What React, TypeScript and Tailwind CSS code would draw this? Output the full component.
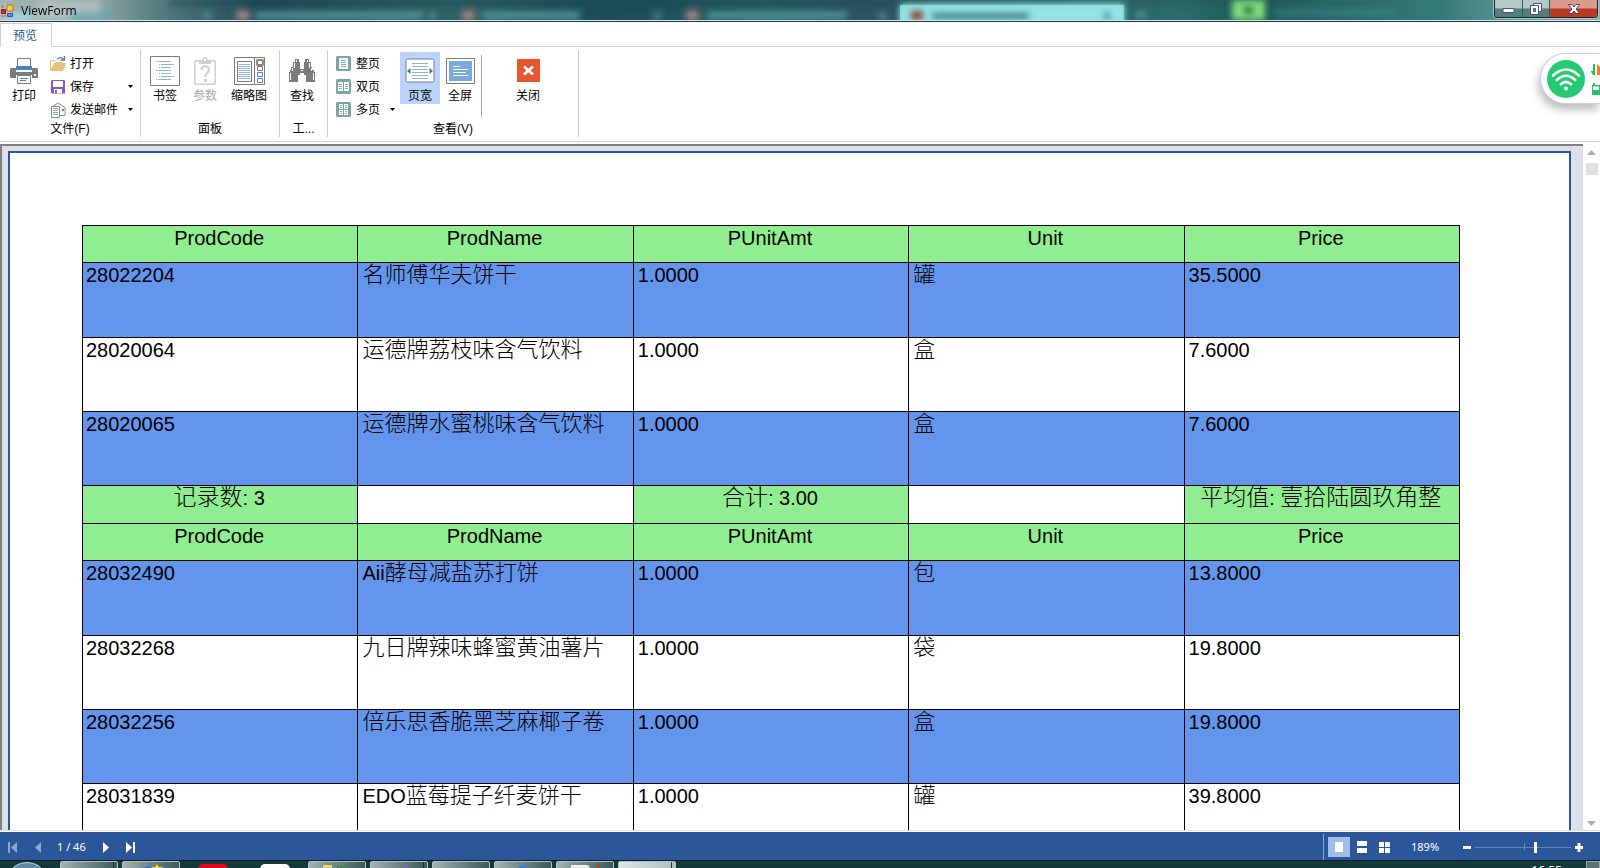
import type { ReactNode } from "react";

const columns = ["ProdCode", "ProdName", "PUnitAmt", "Unit", "Price"];

const groups = [
  {
    rows: [
      ["28022204", "名师傅华夫饼干", "1.0000", "罐", "35.5000"],
      ["28020064", "运德牌荔枝味含气饮料", "1.0000", "盒", "7.6000"],
      ["28020065", "运德牌水蜜桃味含气饮料", "1.0000", "盒", "7.6000"],
    ],
    summary: ["记录数: 3", "", "合计: 3.00", "", "平均值: 壹拾陆圆玖角整"],
  },
  {
    rows: [
      ["28032490", "Aii酵母减盐苏打饼", "1.0000", "包", "13.8000"],
      ["28032268", "九日牌辣味蜂蜜黄油薯片", "1.0000", "袋", "19.8000"],
      ["28032256", "倍乐思香脆黑芝麻椰子卷", "1.0000", "盒", "19.8000"],
      ["28031839", "EDO蓝莓提子纤麦饼干", "1.0000", "罐", "39.8000"],
    ],
    summary: null,
  },
];

/* ---------- ribbon icons ---------- */

function PrinterIcon() {
  return (
    <svg width="28" height="26" viewBox="0 0 28 26">
      <path d="M7.500 9V.5h13V9" fill="#fff" stroke="#7b7b7b" />
      <path d="M0 11l1-1h5v4h16v-4h5l1 1v9h-6v-3H6v3H1l-1-1z" fill="#7b7b7b" />
      <path d="M6 8h16v4H6z" fill="#4d82b8" />
      <path d="M24 16h2v2h-2z" fill="#fff" />
      <path d="M7.500 17.500h13v8h-13z" fill="#fff" stroke="#7b7b7b" />
      <path d="M10 20.500h8M10 22.500h6" stroke="#4d82b8" />
    </svg>
  );
}

function OpenIcon() {
  return (
    <svg width="16" height="16" viewBox="0 0 16 16">
      <path d="M.5 14V4.500h4l1.500 2h6V8" fill="#fff" stroke="#e8c17c" />
      <path d="M0 15l4-8h12l-3 8z" fill="#e8c17c" />
      <path d="M7 3.500c1.500-2.500 5-2.500 6.500-.5M14.500 0v4h-4" fill="none" stroke="#4d82b8" strokeWidth="1.300" />
    </svg>
  );
}

function SaveIcon() {
  return (
    <svg width="16" height="16" viewBox="0 0 16 16">
      <path d="M2 1h12.500l.5 1v12.500H2l-1-1V2z" fill="#8c55b4" />
      <path d="M3 2h10v6H3zM4 10h8v4H4z" fill="#fff" />
      <path d="M5 11h2v3H5z" fill="#8c55b4" />
    </svg>
  );
}

function MailIcon() {
  return (
    <svg width="16" height="16" viewBox="0 0 16 16">
      <path d="M1.500 5.500L8 .8l7 4.700v8H9" fill="#fff" stroke="#8a8a8a" />
      <path d="M1.500 4.500h8v11h-8z" fill="#fff" stroke="#8a8a8a" />
      <path d="M3 6.500h5M3 8.500h5M3 10.500h5M3 12.500h5" stroke="#7ea6d6" />
      <path d="M12 7h2v2h-2z" fill="#e8552f" />
    </svg>
  );
}

function BookmarkIcon() {
  return (
    <svg width="30" height="30" viewBox="0 0 30 30">
      <path d="M.5.500h29v29H.5z" fill="#fff" stroke="#7b7b7b" />
      <path d="M8 5.500h13M11 8.500h13M11 11.500h10M8 14.500h13M11 17.500h10M11 20.500h13M8 23.500h13" stroke="#8fb3dd" />
      <path d="M6 5.500h1M9 8.500h1M9 11.500h1M6 14.500h1M9 17.500h1M9 20.500h1M6 23.500h1" stroke="#8fb3dd" />
    </svg>
  );
}

function ParametersIcon() {
  return (
    <svg width="22" height="28" viewBox="0 0 22 28" fill="none">
      <rect x=".75" y="3.750" width="20.500" height="23.500" rx="1.500" stroke="#cfcfcf" strokeWidth="1.500" />
      <path d="M5 3h3.500V1.500Q11-1 13.500 1.500V3H17v4H5z" fill="#cfcfcf" />
      <path d="M10 2h2v2h-2z" fill="#fff" />
      <path d="M7.500 13c0-5 7.500-5 7.500-.5 0 3.500-3.700 3.500-3.700 7.500" stroke="#cfcfcf" strokeWidth="2" />
      <path d="M10 22h3v3h-3z" fill="#cfcfcf" />
    </svg>
  );
}

function ThumbnailsIcon() {
  return (
    <svg width="31" height="28" viewBox="0 0 31 28" fill="none">
      <path d="M.5.500h30v27H.5zM20.500.500v27M3.500 4.500h14v20h-14z" fill="#fff" stroke="#7b7b7b" />
      <path d="M5 7.500h11M5 9.500h11M5 11.500h11M5 13.500h11M5 15.500h11M5 17.500h11M5 19.500h11M5 21.500h11" stroke="#8fb3dd" />
      <path d="M23.500 9.500h5v4h-5zM23.500 15.500h5v4h-5zM23.500 21.500h5v4h-5z" stroke="#4d82b8" />
      <path d="M22.500 2.500h7v6h-7z" stroke="#e87b3c" />
      <path d="M23.500 3.500h5v4h-5z" stroke="#4d82b8" />
    </svg>
  );
}

function BinocularsIcon() {
  return (
    <svg width="26" height="24" viewBox="0 0 26 24" fill="#7b7b7b">
      <path d="M6 0h4v3h1v7h4V3h1V0h4v3h2v5h1v3h2v2h1v10h-9v-7h-2v-2h-4v2H9v7H0V13h1v-2h1V8h2V3h2z" />
      <path d="M7.500 1v2M18.500 1v2M5.500 4v5M20.500 4v5M3.500 9v3M22.500 9v3M1.500 14v7M24.500 14v7M12 11.500h2" stroke="#fff" />
    </svg>
  );
}

function PagesIcon({ layout }: { layout: "single" | "double" | "multi" }) {
  return (
    <svg width="15" height="15" viewBox="0 0 15 15">
      <rect width="15" height="15" rx="1.500" fill="#78a898" />
      {layout === "single" && (
        <>
          <path d="M3 2h9v11H3z" fill="#fff" />
          <path d="M5 4.500h5M5 6.500h5M5 8.500h5M5 10.500h5" stroke="#8da5d8" />
        </>
      )}
      {layout === "double" && (
        <>
          <path d="M2 3h5v9H2zM8 3h5v9H8z" fill="#fff" />
          <path d="M3 5.500h3M3 7.500h3M3 9.500h3M9 5.500h3M9 7.500h3M9 9.500h3" stroke="#8da5d8" />
        </>
      )}
      {layout === "multi" && (
        <>
          <path d="M3 2h4v5H3zM8 2h4v5H8zM3 8h4v5H3zM8 8h4v5H8z" fill="#fff" />
          <path d="M4 3.500h2M4 5.500h2M9 3.500h2M9 5.500h2M4 9.500h2M4 11.500h2M9 9.500h2M9 11.500h2" stroke="#8da5d8" />
        </>
      )}
    </svg>
  );
}

function PageWidthIcon() {
  return (
    <svg width="30" height="26" viewBox="0 0 30 26">
      <rect x="1" y="1" width="28" height="23" rx="1.500" fill="#fff" stroke="#7b7b7b" />
      <path d="M7 5.500h16M7 8.500h16M7 11.500h16M7 14.500h16M7 17.500h16M7 20.500h16" stroke="#8fb3dd" />
      <path d="M5.500 10v6L2 13zM24.500 10v6l3.500-3z" fill="#3f74b0" />
    </svg>
  );
}

function FullScreenIcon() {
  return (
    <svg width="29" height="26" viewBox="0 0 29 26">
      <path d="M.5.500h28v25H.5z" fill="#fff" stroke="#7b7b7b" />
      <path d="M3 3h23v20H3z" fill="#7aa9dc" />
      <path d="M7 8.500h7M7 11.500h15M7 14.500h13M7 17.500h15" stroke="#fff" />
    </svg>
  );
}

function CloseIcon() {
  return (
    <svg width="23" height="23" viewBox="0 0 23 23">
      <path d="M0 0h23v23H0z" fill="#e8582f" />
      <path d="M7 7.500l9 8M16 7.500l-9 8" stroke="#fff" strokeWidth="2.600" />
    </svg>
  );
}

/* ---------- ribbon parts ---------- */

function Caret() {
  return (
    <svg width="5" height="3" viewBox="0 0 5 3" className="ml-auto" aria-hidden="true">
      <path d="M0 0h5L2.500 3z" fill="#000" />
    </svg>
  );
}

interface LargeButtonProps {
  icon: ReactNode;
  label: string;
  active?: boolean;
  disabled?: boolean;
}

function LargeButton({ icon, label, active, disabled }: LargeButtonProps) {
  return (
    <button
      type="button"
      disabled={disabled}
      className={`flex h-[52px] w-10 flex-col items-center whitespace-nowrap ${active ? "bg-[#bad4fd]" : ""} ${disabled ? "text-[#a8a8a8]" : ""}`}
    >
      <span className="flex h-[37px] items-center">{icon}</span>
      <span className="leading-[15px]">{label}</span>
    </button>
  );
}

function SmallButton({ icon, label, menu }: { icon: ReactNode; label: string; menu?: boolean }) {
  return (
    <button type="button" className="flex h-[23px] w-full items-center whitespace-nowrap">
      <span className="flex w-5 shrink-0">{icon}</span>
      <span>{label}</span>
      {menu && <Caret />}
    </button>
  );
}

function RibbonGroup({ title, className, children }: { title: string; className: string; children: ReactNode }) {
  return (
    <section className={`flex h-[87px] shrink-0 flex-col border-r border-[#d0d0d0] ${className}`}>
      <div className="flex h-[71px] pt-0.5">{children}</div>
      <h2 className="text-center">{title}</h2>
    </section>
  );
}

/* ---------- window chrome ---------- */

function GlassBackdrop() {
  return (
    <svg className="absolute inset-0 h-full w-full" viewBox="0 0 1600 20" preserveAspectRatio="none" aria-hidden="true">
      <defs>
        <linearGradient id="glass">
          <stop offset="0" stopColor="#a3b5b5" />
          <stop offset=".06" stopColor="#91a8a8" />
          <stop offset=".1" stopColor="#527c7e" />
          <stop offset=".16" stopColor="#1f4a58" />
          <stop offset=".28" stopColor="#2d6266" />
          <stop offset=".38" stopColor="#1c4b58" />
          <stop offset=".48" stopColor="#245e62" />
          <stop offset=".54" stopColor="#2c5363" />
          <stop offset=".74" stopColor="#2b6b6b" />
          <stop offset=".78" stopColor="#1d5958" />
          <stop offset=".9" stopColor="#367a78" />
          <stop offset="1" stopColor="#8fb0b0" />
        </linearGradient>
        <filter id="soft" x="-20%" y="-100%" width="140%" height="300%">
          <feGaussianBlur stdDeviation="3" />
        </filter>
      </defs>
      <rect width="1600" height="20" fill="url(#glass)" />
      <g filter="url(#soft)">
        <path d="M170 0h740v6H170zM1130 0h180v3h-180z" fill="#1b4a50" opacity=".6" />
        <path d="M40 0h60v20H30z" fill="#c1cccc" opacity=".6" />
        <path d="M0 14h30v6H0z" fill="#9fe0f0" />
        <path d="M70 12h40v8H70zM255 12h168v7H255zM482 12h98v7h-98zM707 12h140v7H707zM204 13h7v6h-7zM429 13h7v6h-7zM654 13h7v6h-7zM879 13h7v6h-7zM1136 12h10v6h-10z" fill="#5fa6aa" opacity=".8" />
        <path d="M236 11h14v9h-14zM462 11h13v9h-13zM686 11h13v9h-13z" fill="#a68482" />
        <path d="M1275 10h120v5h-120z" fill="#4b9895" opacity=".5" />
      </g>
      <g filter="url(#soft)">
        <path d="M900 4h224v20H900z" fill="#9aeceb" />
        <path d="M1232 0h33v20h-33z" fill="#83d97f" />
      </g>
      <path d="M900 5h224v15H900z" fill="#91e2e2" opacity=".8" />
      <g filter="url(#soft)">
        <path d="M911 11h12v9h-12z" fill="#963d38" />
        <path d="M932 13h97v6h-97zM1104 13h6v6h-6z" fill="#3b8082" />
        <path d="M1244 6h9v8h-9z" fill="#2f7a45" />
      </g>
    </svg>
  );
}

function TitleBar() {
  return (
    <header className="relative flex h-[22px] shrink-0 items-start overflow-hidden border-b border-[#173a45] bg-[#dce8e8]">
      <div className="absolute inset-x-0 top-0 h-5 overflow-hidden">
        <GlassBackdrop />
      </div>
      <div className="relative flex h-[22px] flex-1 items-center gap-[7px]">
        <svg width="14" height="14" viewBox="0 0 14 14" aria-hidden="true">
          <path d="M0 0h14v14H0z" fill="#b8bcbc" />
          <path d="M7 1h6v6H7z" fill="#fbce37" stroke="#a87913" />
          <path d="M1.500 5.500h4v4h-4z" fill="#d92e20" stroke="#8d1b12" />
          <path d="M7.500 9.500h5v3h-5z" fill="#5b8df0" stroke="#3154ad" />
          <path d="M1 1h3v3H1zM1 11h2v2H1zM4 11h2v2H4z" fill="#8e9696" />
        </svg>
        <h1 className="font-['Open_Sans',sans-serif] text-xs leading-5 text-black">ViewForm</h1>
      </div>
      <div className="relative mr-0.5 flex h-[18px] overflow-hidden rounded-b-[4px] border border-t-0 border-[#17292c] shadow-[0_0_0_1px_#a9c4c4]">
        <button type="button" aria-label="最小化" className="flex w-7 items-center justify-center border-r border-[#3b5556] bg-linear-to-b from-[#b5c8c8] from-45% to-[#557c7d] to-55%">
          <svg width="13" height="6" viewBox="0 0 13 6" className="mt-1">
            <path d="M1 .5h11v4H1z" fill="#fff" stroke="#4a5566" />
          </svg>
        </button>
        <button type="button" aria-label="还原" className="flex w-[27px] items-center justify-center border-r border-[#3b5556] bg-linear-to-b from-[#b5c8c8] from-45% to-[#557c7d] to-55%">
          <svg width="12" height="12" viewBox="0 0 12 12">
            <path d="M3.500.500h8v8h-8z" fill="#fff" stroke="#4a5566" />
            <path d="M.5 2.500h8v9h-8z" fill="#fff" stroke="#4a5566" />
            <path d="M3.500 5.500h2v3h-2z" fill="#8ab0b0" stroke="#4a5566" />
          </svg>
        </button>
        <button type="button" aria-label="关闭窗口" className="flex w-[47px] items-center justify-center bg-linear-to-b from-[#d99a8d] from-45% to-[#b93a20] to-55%">
          <svg width="12" height="10" viewBox="0 0 12 10">
            <path d="M.5.500h3.500l2 2.500 2-2.500h3.500L8.200 5l3.300 4.500H8L6 7 4 9.500H.5L3.800 5z" fill="#fff" stroke="#4a4c5c" />
          </svg>
        </button>
      </div>
    </header>
  );
}

function Ribbon() {
  return (
    <div className="shrink-0 border-b border-[#d0d0d0] bg-white font-['Liberation_Sans','Noto_Sans_CJK_SC',sans-serif] text-xs leading-4 text-black">
      <nav className="flex h-[25px] items-end border-b border-[#d0d0d0]">
        <button type="button" className="-mb-px h-6 w-[52px] border border-b-0 border-[#d0d0d0] bg-white pr-0.5 text-[#2b579a]">
          预览
        </button>
      </nav>
      <div className="flex h-[94px] pt-[3px]">
        <RibbonGroup title="文件(F)" className="w-[141px]">
          <div className="ml-1">
            <LargeButton icon={<PrinterIcon />} label="打印" />
          </div>
          <div className="ml-1.5 w-[83px]">
            <SmallButton icon={<OpenIcon />} label="打开" />
            <SmallButton icon={<SaveIcon />} label="保存" menu />
            <SmallButton icon={<MailIcon />} label="发送邮件" menu />
          </div>
        </RibbonGroup>
        <RibbonGroup title="面板" className="w-[139px]">
          <div className="flex pl-1">
            <LargeButton icon={<BookmarkIcon />} label="书签" />
            <LargeButton icon={<ParametersIcon />} label="参数" disabled />
            <div className="ml-1">
              <LargeButton icon={<ThumbnailsIcon />} label="缩略图" />
            </div>
          </div>
        </RibbonGroup>
        <RibbonGroup title="工..." className="w-12">
          <div className="pl-0.5">
            <LargeButton icon={<BinocularsIcon />} label="查找" />
          </div>
        </RibbonGroup>
        <RibbonGroup title="查看(V)" className="w-[251px]">
          <div className="ml-2 w-[59px]">
            <SmallButton icon={<PagesIcon layout="single" />} label="整页" />
            <SmallButton icon={<PagesIcon layout="double" />} label="双页" />
            <SmallButton icon={<PagesIcon layout="multi" />} label="多页" menu />
          </div>
          <div className="ml-[5px] flex">
            <LargeButton icon={<PageWidthIcon />} label="页宽" active />
            <LargeButton icon={<FullScreenIcon />} label="全屏" />
          </div>
          <div className="mt-[3px] mr-[26px] ml-px h-[62px] border-r border-[#a8a8a8]" />
          <LargeButton icon={<CloseIcon />} label="关闭" />
        </RibbonGroup>
      </div>
    </div>
  );
}

function WifiWidget() {
  return (
    <aside className="absolute top-[53px] right-0 flex h-[51px] w-[60px] items-center gap-1.5 overflow-hidden rounded-l-full border border-r-0 border-[#cfcfcf] bg-white pl-1.5 shadow-[-2px_6px_8px_rgba(0,0,0,0.25)]">
      <svg width="38" height="38" viewBox="0 0 38 38" className="shrink-0" fill="none" stroke="#fff" strokeWidth="2.600" strokeLinecap="round">
        <circle cx="19" cy="19" r="19" fill="#27c973" stroke="none" />
        <path d="M6 15.500q13-12 26 0M9.800 20q9.200-8.500 18.400 0M13.800 24.200q5.200-4.600 10.400 0" />
        <circle cx="19" cy="28.500" r="2" fill="#fff" stroke="none" />
      </svg>
      <svg width="9" height="32" viewBox="0 0 9 32" className="shrink-0">
        <path d="M2 1h2v11H2L0 9V8h2z" fill="#1dc46c" />
        <path d="M6 1l3 3v8H6z" fill="#f07d1b" />
        <path d="M1 22h1v-2h2v2h5v10H1z" fill="#1dc46c" />
        <path d="M2 23.500h6V27H2z" fill="#fff" />
      </svg>
    </aside>
  );
}

/* ---------- report ---------- */

// Latin and Chinese runs have different sizes in the report
function ReportText({ text, large }: { text: string; large?: boolean }) {
  return text.split(/([\u4e00-\u9fff]+)/).map((part, i) =>
    i % 2 ? (
      <span key={i} className={`font-['Noto_Sans_CJK_SC',sans-serif] leading-4 font-light ${large ? "text-[23px]" : "text-[22px]"}`}>
        {part}
      </span>
    ) : (
      part
    )
  );
}

function ReportTable() {
  return (
    <table className="w-full table-fixed border-collapse font-['Liberation_Sans',sans-serif] text-xl leading-6 text-black">
      {groups.map((group, g) => (
        <tbody key={g}>
          <tr className="h-[37px] bg-[#90ee90]">
            {columns.map((name) => (
              <th key={name} scope="col" className="border border-black p-0 pr-0.5 text-center align-top font-normal">
                {name}
              </th>
            ))}
          </tr>
          {group.rows.map((row, r) => (
            <tr key={row[0]} className={`${r === 0 ? "h-[75px]" : "h-[74px]"} ${r % 2 === 0 ? "bg-[#6495ed]" : "bg-white"}`}>
              {row.map((cell, c) => (
                <td key={c} className="border border-black p-0 pl-1 align-top whitespace-nowrap first:pl-[3px]">
                  <ReportText text={cell} />
                </td>
              ))}
            </tr>
          ))}
          {group.summary && (
            <tr className="h-[38px]">
              {group.summary.map((cell, c) => (
                <td key={c} className={`border border-black p-0 pr-0.5 text-center align-top whitespace-nowrap ${cell ? "bg-[#90ee90]" : ""}`}>
                  <ReportText text={cell} large />
                </td>
              ))}
            </tr>
          )}
        </tbody>
      ))}
    </table>
  );
}

function Viewer() {
  return (
    <main className="mt-0.5 flex min-h-0 flex-1 border-b border-[#e0e0e0] bg-white">
      <div className="flex min-w-0 flex-1 overflow-hidden border-t-2 border-l-2 border-[#808080] bg-[#dce0e8] pt-[5px] pr-3 pl-1.5">
        <div className="h-[1200px] flex-1 border-2 border-[#2b579a] bg-white pt-[72px] pr-[109px] pl-[72px]">
          <ReportTable />
        </div>
      </div>
      <div className="flex w-[17px] shrink-0 flex-col items-center pt-1.5 pb-1">
        <svg width="9" height="5" viewBox="0 0 9 5" aria-hidden="true">
          <path d="M0 5h9L4.500 0z" fill="#ababab" />
        </svg>
        <div className="mt-2 h-3 w-3 bg-[#e1e1e1]" />
        <svg width="9" height="5" viewBox="0 0 9 5" className="mt-auto" aria-hidden="true">
          <path d="M0 0h9L4.500 5z" fill="#ababab" />
        </svg>
      </div>
    </main>
  );
}

function StatusBar() {
  return (
    <footer className="mt-px flex h-7 shrink-0 items-center bg-[#2b579a] pt-0.5 font-['Noto_Sans',sans-serif] text-[11px] leading-4 text-white">
      <button type="button" aria-label="第一页" disabled className="ml-2">
        <svg width="9" height="11" viewBox="0 0 9 11" fill="#8da6cd">
          <path d="M0 0h2v11H0zM9 0v11L3 5.500z" />
        </svg>
      </button>
      <button type="button" aria-label="上一页" disabled className="ml-[18px]">
        <svg width="6" height="11" viewBox="0 0 6 11" fill="#8da6cd">
          <path d="M6 0v11L0 5.500z" />
        </svg>
      </button>
      <span className="ml-4">1 / 46</span>
      <button type="button" aria-label="下一页" className="ml-[17px]">
        <svg width="6" height="11" viewBox="0 0 6 11" fill="#fff">
          <path d="M0 0v11l6-5.500z" />
        </svg>
      </button>
      <button type="button" aria-label="最后一页" className="ml-[17px]">
        <svg width="9" height="11" viewBox="0 0 9 11" fill="#fff">
          <path d="M7 0h2v11H7zM0 0v11l6-5.500z" />
        </svg>
      </button>

      <div className="ml-auto flex h-[26px] items-center border-l border-[#8da6cd] pl-1">
        <button type="button" aria-label="单页" className="flex h-5 w-[22px] items-center justify-center bg-[#a0bce8]">
          <svg width="8" height="10" viewBox="0 0 8 10">
            <path d="M0 0h8v10H0z" fill="#fff" />
          </svg>
        </button>
        <button type="button" aria-label="连续" className="ml-[7px]">
          <svg width="10" height="12" viewBox="0 0 10 12">
            <path d="M0 0h10v5H0zM0 7h10v5H0z" fill="#fff" />
          </svg>
        </button>
        <button type="button" aria-label="多页视图" className="ml-3">
          <svg width="11" height="11" viewBox="0 0 11 11">
            <path d="M0 0h5v5H0zM6 0h5v5H6zM0 6h5v5H0zM6 6h5v5H6z" fill="#fff" />
          </svg>
        </button>
      </div>
      <span className="ml-[21px] w-[30px]">189%</span>
      <button type="button" aria-label="缩小" className="ml-[22px]">
        <svg width="8" height="9" viewBox="0 0 8 9">
          <path d="M0 3h8v3H0z" fill="#fff" />
        </svg>
      </button>
      <div className="relative ml-1 flex h-5 w-24 items-center">
        <div className="absolute top-1.5 left-[49px] h-[7px] w-px bg-[#6d8fc5]" />
        <input
          type="range"
          min={0}
          max={100}
          defaultValue={63}
          aria-label="缩放"
          className="relative h-5 w-full appearance-none bg-transparent [&::-webkit-slider-runnable-track]:h-px [&::-webkit-slider-runnable-track]:bg-[#5f83bd] [&::-webkit-slider-thumb]:-mt-[5px] [&::-webkit-slider-thumb]:h-[11px] [&::-webkit-slider-thumb]:w-[3px] [&::-webkit-slider-thumb]:appearance-none [&::-webkit-slider-thumb]:bg-white"
        />
      </div>
      <button type="button" aria-label="放大" className="mr-[17px] ml-1">
        <svg width="8" height="9" viewBox="0 0 8 9">
          <path d="M0 3h8v3H0zM2.500 0h3v9h-3z" fill="#fff" />
        </svg>
      </button>
    </footer>
  );
}

function TaskButton({ label, stacked, active, children }: { label: string; stacked?: boolean; active?: boolean; children?: ReactNode }) {
  return (
    <button
      type="button"
      aria-label={label}
      className={`flex h-5 w-[58px] rounded-t-xs border border-[#b5c4c4] bg-linear-to-r ${stacked ? "pr-1" : ""} ${active ? "from-[#dce6e6] to-[#aebfbf]" : "from-[#a3b3b3] to-[#3a5a5b]"}`}
    >
      <svg width="58" height="8" viewBox="0 0 58 8" className="shrink-0" aria-hidden="true">
        {stacked && <path d="M52 0h1v8h-1z" fill="#16302f" />}
        {children}
      </svg>
    </button>
  );
}

function Taskbar() {
  return (
    <div className="flex h-2 shrink-0 items-start overflow-hidden border-t border-[#0b1a1c] bg-[#123a3a]">
      <svg width="56" height="8" viewBox="0 0 56 8" className="shrink-0" aria-hidden="true">
        <ellipse cx="27" cy="14" rx="17" ry="12.500" fill="#5e89a3" stroke="#b9d2dc" />
      </svg>
      <div className="ml-1 flex gap-1">
        <TaskButton label="资源管理器" stacked>
          <path d="M12 6h14v2H12z" fill="#d7b15c" />
        </TaskButton>
        <TaskButton label="浏览器">
          <path d="M16 8q6-5 12-3v3z" fill="#2573c9" />
          <path d="M34 2l2 3h4l-2 3h-8l-1-3h3z" fill="#f5dc2c" />
        </TaskButton>
        <svg width="120" height="8" viewBox="0 0 120 8" aria-hidden="true">
          <rect x="14" y="3" width="30" height="12" rx="5" fill="#e2071c" />
          <rect x="76" y="3" width="30" height="12" rx="5" fill="#fff" />
        </svg>
        <TaskButton label="任务">
          <path d="M14 3h9v5h-9z" fill="#ecd27a" />
          <path d="M28 4.500h12" stroke="#3d8d38" strokeWidth="2" strokeDasharray="2 1" />
        </TaskButton>
        <TaskButton label="开发工具" stacked>
          <path d="M34 3l8 5h-8z" fill="#8a5ecb" />
        </TaskButton>
        <TaskButton label="窗口" />
        <TaskButton label="应用">
          <ellipse cx="28" cy="8" rx="6" ry="4" fill="#2b7de9" />
        </TaskButton>
        <TaskButton label="画图">
          <path d="M14 3h17l3 5H14z" fill="#eef0f0" />
          <path d="M40 3h3v3h-3z" fill="#b83c34" />
        </TaskButton>
        <TaskButton label="ViewForm" stacked active>
          <path d="M12 6h12v2H12z" fill="#c9cccc" />
          <path d="M24 6h15v2H24z" fill="#c9962c" />
        </TaskButton>
      </div>
      <time className="mt-0.5 mr-6 ml-auto font-['Noto_Sans',sans-serif] text-xs leading-4 text-white">16:55</time>
      <div className="h-4 w-3.5 border border-[#9aabab] bg-[#5c7272]" />
    </div>
  );
}

export default function App() {
  return (
    <div className="relative flex h-screen flex-col overflow-hidden bg-white">
      <TitleBar />
      <Ribbon />
      <Viewer />
      <StatusBar />
      <Taskbar />
      <WifiWidget />
    </div>
  );
}
